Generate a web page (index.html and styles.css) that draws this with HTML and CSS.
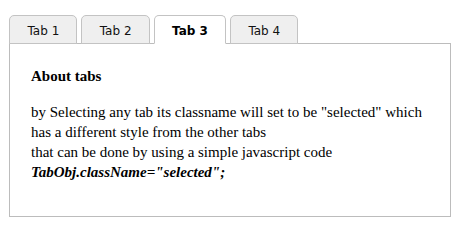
FILE: index.html
```html
<!DOCTYPE html>
<html lang="en">

<head>
    <meta charset="UTF-8">
    <title>Tabs</title>
    <link rel="stylesheet" href="styles.css">
</head>

<body>
    <div class="tabbox">
        <ul class="tabs">
            <li><a href="#">Tab 1</a></li>
            <li><a href="#">Tab 2</a></li>
            <li class="selected"><a href="#">Tab 3</a></li>
            <li><a href="#">Tab 4</a></li>
        </ul>
        <div class="panel">
            <h4>About tabs</h4>
            <p>by Selecting any tab its classname will set to be "selected" which has a different style from the other tabs<br>
                that can be done by using a simple javascript code<br>
                <b><i>TabObj.className="selected";</i></b></p>
        </div>
    </div>
</body>

</html>
```

FILE: styles.css
```css
*{
    margin: 0;
    padding: 0;
}
li{
    list-style: none;
}
body{
    background-color: #fff;
    padding: 15px 0 0 9px;
}
.tabbox{
    width: 442px;
}
.tabs{
    display: flex;
    gap: 4px;
    margin-bottom: -1px;
    position: relative;
    z-index: 1;
}
.tabs li{
    border: 1px solid #c3c3c3;
    border-radius: 5px 5px 0 0;
    background-color: #efefef;
}
.tabs li a{
    display: block;
    padding: 8px 17px 5px 17.5px;
    font-family: "DejaVu Sans", Verdana, sans-serif;
    font-size: 12px;
    line-height: 14px;
    color: #111;
    text-decoration: none;
}
.tabs .selected{
    background-color: #fff;
    border-bottom-color: #fff;
}
.tabs .selected a{
    font-weight: bold;
    color: #000;
}
.panel{
    border: 1px solid #bcbcbc;
    padding: 22px 20px 34px 21px;
    font-family: "Liberation Serif", "Times New Roman", serif;
    font-size: 15px;
    line-height: 20px;
    color: #000;
}
.panel h4{
    font-size: 15px;
    margin-bottom: 16px;
}
```
